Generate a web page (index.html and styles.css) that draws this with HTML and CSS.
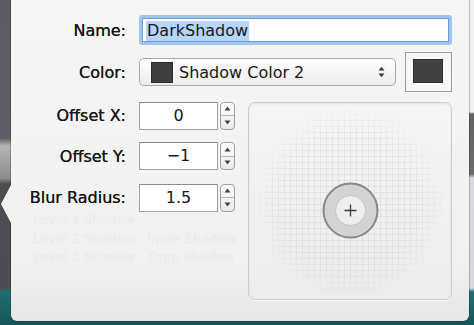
FILE: index.html
```html
<!DOCTYPE html>
<html lang="en">
<head>
  <meta charset="UTF-8">
  <title>Shadow Inspector</title>
  <link rel="stylesheet" href="styles.css">
</head>
<body>
  <div class="popover">
    <form class="shadow-form">
      <label class="field-label">Name:</label>
      <div class="name-field"><span class="selected">DarkShadow</span></div>

      <label class="field-label">Color:</label>
      <div class="color-row">
        <div class="popup">
          <span class="swatch"></span>
          <span class="popup-text">Shadow Color 2</span>
          <svg class="popup-arrows" width="7" height="12" viewBox="0 0 7 12">
            <path d="M0.5 4.5 L3.5 0.8 L6.5 4.5 Z M0.5 7.5 L3.5 11.2 L6.5 7.5 Z" fill="#3a3a3a"/>
          </svg>
        </div>
        <div class="color-well"><span class="well-swatch"></span></div>
      </div>

      <label class="field-label">Offset X:</label>
      <div class="number">
        <div class="number-input">0</div>
        <div class="stepper">
          <span class="step"><svg width="7" height="5" viewBox="0 0 7 5"><path d="M0.5 4.5 L3.5 0.5 L6.5 4.5 Z" fill="#444"/></svg></span>
          <span class="step"><svg width="7" height="5" viewBox="0 0 7 5"><path d="M0.5 0.5 L3.5 4.5 L6.5 0.5 Z" fill="#444"/></svg></span>
        </div>
      </div>

      <div class="preview">
        <svg width="202" height="196" viewBox="0 0 202 196">
          <defs>
            <pattern id="grid" width="6" height="6" patternUnits="userSpaceOnUse" x="5" y="5">
              <path d="M6 0 L0 0 0 6" fill="none" stroke="#d4d4d4" stroke-width="1"/>
            </pattern>
            <radialGradient id="fade" cx="101" cy="100" r="98" gradientUnits="userSpaceOnUse">
              <stop offset="0" stop-color="#fff"/>
              <stop offset="0.7" stop-color="#fff" stop-opacity="0.85"/>
              <stop offset="1" stop-color="#fff" stop-opacity="0"/>
            </radialGradient>
            <mask id="gridMask">
              <rect x="0" y="0" width="202" height="196" fill="url(#fade)"/>
            </mask>
          </defs>
          <rect x="10" y="8" width="182" height="182" fill="url(#grid)" mask="url(#gridMask)"/>
          <line x1="101.5" y1="8" x2="101.5" y2="188" stroke="#c0c0c0" mask="url(#gridMask)"/>
          <line x1="8" y1="107.5" x2="194" y2="107.5" stroke="#c0c0c0" mask="url(#gridMask)"/>
          <circle cx="101.5" cy="107.5" r="27" fill="#d3d3d3" stroke="#888" stroke-width="2"/>
          <circle cx="101.5" cy="107.5" r="15" fill="#eeeeee" stroke="#c4c4c4" stroke-width="1"/>
          <path d="M95.5 107.5 H107.5 M101.5 101.5 V113.5" stroke="#3c3c3c" stroke-width="1.3"/>
        </svg>
      </div>

      <label class="field-label">Offset Y:</label>
      <div class="number">
        <div class="number-input">−1</div>
        <div class="stepper">
          <span class="step"><svg width="7" height="5" viewBox="0 0 7 5"><path d="M0.5 4.5 L3.5 0.5 L6.5 4.5 Z" fill="#444"/></svg></span>
          <span class="step"><svg width="7" height="5" viewBox="0 0 7 5"><path d="M0.5 0.5 L3.5 4.5 L6.5 0.5 Z" fill="#444"/></svg></span>
        </div>
      </div>

      <label class="field-label">Blur Radius:</label>
      <div class="number">
        <div class="number-input">1.5</div>
        <div class="stepper">
          <span class="step"><svg width="7" height="5" viewBox="0 0 7 5"><path d="M0.5 4.5 L3.5 0.5 L6.5 4.5 Z" fill="#444"/></svg></span>
          <span class="step"><svg width="7" height="5" viewBox="0 0 7 5"><path d="M0.5 0.5 L3.5 4.5 L6.5 0.5 Z" fill="#444"/></svg></span>
        </div>
      </div>

      <div class="ghost-rows">
        <div class="ghost-row"><span>Level 1 Shadow</span></div>
        <div class="ghost-row"><span>Level 2 Shadow</span><span>Inner Shadow</span></div>
        <div class="ghost-row"><span>Level 3 Shadow</span><span>Drop Shadow</span></div>
      </div>
    </form>
  </div>
</body>
</html>
```

FILE: styles.css
```css
html, body {
  margin: 0;
  height: 100%;
  overflow: hidden;
}
body {
  font-family: "DejaVu Sans", Verdana, sans-serif;
  font-size: 16px;
  color: #161616;
  background-color: #165659;
  background-image:
    linear-gradient(to bottom, #5a5d62 0, #5c5f64 138px, #b4b4b0 146px, #8e8e8a 178px, #4c4f53 184px, #4b4e52 288px, #1f6e70 292px, #165659 100%),
    linear-gradient(to bottom, #f0f0f0 0, #f0f0f0 112px, #606266 114px, #6a6c70 174px, #d9dae0 178px, #d6d7df 288px, #1f6e70 292px, #165659 100%);
  background-size: 11px 100%, 5px 100%;
  background-position: left top, right top;
  background-repeat: no-repeat;
}

.popover {
  position: relative;
  margin-left: 11px;
  width: 458px;
  height: 321px;
  box-sizing: border-box;
  background: linear-gradient(to bottom, #f6f6f6 0, #f1f1f1 260px, #ebebeb 290px, #e6e7e7 321px);
  border-radius: 0 0 6px 6px;
  box-shadow: 0 0 0 1px rgba(0, 0, 0, 0.2);
}
.popover::before {
  content: "";
  position: absolute;
  left: -10px;
  top: 183px;
  width: 11px;
  height: 42px;
  background: #f2f2f2;
  clip-path: polygon(100% 0, 0 50%, 100% 100%);
}

.shadow-form {
  display: grid;
  grid-template-columns: 115px 96px 204px;
  grid-template-rows: 36px 48px 39px 42px 41px auto;
  column-gap: 13px;
  padding-top: 12px;
}

.field-label {
  grid-column: 1;
  align-self: center;
  text-align: right;
  white-space: nowrap;
  text-shadow: 0 0 0.4px #161616;
}

.name-field {
  grid-column: 2 / 4;
  align-self: center;
  height: 30px;
  box-sizing: border-box;
  border: 3px solid #a3c4ec;
  border-radius: 3px;
  box-shadow: inset 0 0 0 1px #6d9bd5;
  background: #fff;
  padding: 2px 0 0 4px;
  display: flex;
  align-items: center;
}
.selected {
  background: #b5d5fc;
  line-height: 20px;
  padding: 0 1px;
}

.color-row {
  grid-column: 2 / 4;
  display: flex;
  align-items: center;
  gap: 9px;
}
.popup {
  width: 257px;
  height: 28px;
  box-sizing: border-box;
  border: 1px solid #a6a6a6;
  border-radius: 5px;
  background: linear-gradient(to bottom, #ffffff, #ececec);
  display: flex;
  align-items: center;
  padding: 0 10px 0 11px;
}
.swatch {
  width: 22px;
  height: 21px;
  box-sizing: border-box;
  background: #3e3e3e;
  border: 1px solid #2c2c2c;
  margin-right: 6px;
}
.popup-text {
  flex: 1;
}
.popup-arrows {
  display: block;
}
.color-well {
  width: 47px;
  height: 40px;
  box-sizing: border-box;
  border: 1px solid #9c9c9c;
  background: #f7f7f7;
  padding: 6px 8px 8px 7px;
}
.well-swatch {
  display: block;
  height: 100%;
  background: #414141;
  border: 1px solid #2e2e2e;
  box-sizing: border-box;
}

.number {
  grid-column: 2;
  align-self: center;
  display: flex;
  gap: 2px;
}
.number-input {
  width: 79px;
  height: 28px;
  box-sizing: border-box;
  border: 1px solid #a2a2a2;
  border-top-color: #8c8c8c;
  background: #fff;
  text-align: center;
  line-height: 26px;
}
.stepper {
  width: 15px;
  height: 28px;
  box-sizing: border-box;
  border: 1px solid #9e9e9e;
  border-radius: 4px;
  background: linear-gradient(to bottom, #ffffff, #e9e9e9);
  display: flex;
  flex-direction: column;
}
.step {
  flex: 1;
  display: flex;
  align-items: center;
  justify-content: center;
}
.step + .step {
  border-top: 1px solid #b4b4b4;
}
.step svg {
  display: block;
}

.preview {
  grid-column: 3;
  grid-row: 3 / 7;
  align-self: start;
  margin-top: 6px;
  width: 204px;
  height: 198px;
  box-sizing: border-box;
  border: 1px solid #cbcbcb;
  border-radius: 7px;
  background: linear-gradient(to bottom, #f6f6f6, #ececec);
  box-shadow: inset 0 1px 2px rgba(0, 0, 0, 0.08), 0 1px 0 #fafafa;
}
.preview svg {
  display: block;
}

.ghost-rows {
  grid-column: 1 / 3;
  grid-row: 6;
  margin-top: -7px;
  padding-left: 22px;
  color: #eaeaea;
  font-size: 13px;
}
.ghost-row {
  display: flex;
  gap: 12px;
  height: 18.5px;
  line-height: 18px;
  white-space: nowrap;
}
.ghost-row span:first-child {
  width: 104px;
}
```
